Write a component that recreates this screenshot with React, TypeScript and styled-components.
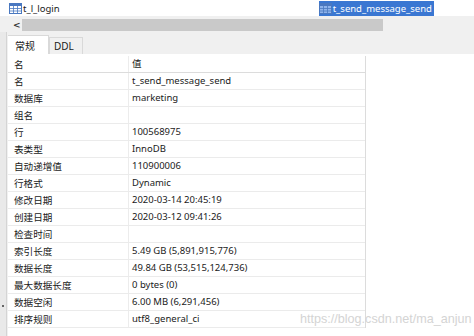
import * as React from 'react'
import styled, { createGlobalStyle } from 'styled-components'

const GlobalStyle = createGlobalStyle`
  html, body {
    margin: 0;
    padding: 0;
    background: #ffffff;
    overflow: hidden;
  }
  body {
    font-family: "Noto Sans CJK SC", "Noto Sans", sans-serif;
    font-size: 9.6px;
    color: #1a1a1a;
  }
`

const rows: [string, string][] = [
  ['名', 't_send_message_send'],
  ['数据库', 'marketing'],
  ['组名', ''],
  ['行', '100568975'],
  ['表类型', 'InnoDB'],
  ['自动递增值', '110900006'],
  ['行格式', 'Dynamic'],
  ['修改日期', '2020-03-14 20:45:19'],
  ['创建日期', '2020-03-12 09:41:26'],
  ['检查时间', ''],
  ['索引长度', '5.49 GB (5,891,915,776)'],
  ['数据长度', '49.84 GB (53,515,124,736)'],
  ['最大数据长度', '0 bytes (0)'],
  ['数据空闲', '6.00 MB (6,291,456)'],
  ['排序规则', 'utf8_general_ci'],
]

const TableIcon = ({ selected }: { selected?: boolean }) => (
  <svg width="13" height="11" viewBox="0 0 13 11">
    <rect x="0.5" y="0.5" width="12" height="10" fill={selected ? '#8fb4ec' : '#ffffff'} stroke="#4a78c0" />
    <rect x="0.5" y="0.5" width="12" height="2.5" fill="#4a78c0" />
    <path d="M4.5 3v8M8.5 3v8M0.5 5.5h12M0.5 8h12" stroke="#4a78c0" strokeWidth="0.8" />
  </svg>
)

export default function App() {
  return (
    <Page>
      <GlobalStyle />
      <ObjectBar>
        <ObjectItem>
          <TableIcon />
          <ObjectName>t_l_login</ObjectName>
        </ObjectItem>
        <ObjectItem selected>
          <TableIcon selected />
          <ObjectName>t_send_message_send</ObjectName>
        </ObjectItem>
      </ObjectBar>
      <ScrollRow>
        <Arrow>&lt;</Arrow>
        <Thumb />
      </ScrollRow>
      <Body>
        <SideStrip>
          <SideDot />
        </SideStrip>
        <Main>
          <TabBar>
            <Tab active>常规</Tab>
            <Tab>DDL</Tab>
          </TabBar>
          <Pane>
            <Grid>
              <HeaderRow>
                <NameCell>名</NameCell>
                <ValueCell>值</ValueCell>
              </HeaderRow>
              {rows.map(([name, value]) => (
                <Row key={name}>
                  <NameCell>{name}</NameCell>
                  <ValueCell>{value}</ValueCell>
                </Row>
              ))}
            </Grid>
            <Watermark>https://blog.csdn.net/ma_anjun</Watermark>
          </Pane>
        </Main>
      </Body>
    </Page>
  )
}

const Page = styled.div`
  width: 474px;
  height: 336px;
  display: flex;
  flex-direction: column;
  overflow: hidden;
  background: #ffffff;
`
const ObjectBar = styled.div`
  height: 16px;
  display: flex;
  align-items: center;
  padding-left: 9px;
  gap: 257px;
  background: #ffffff;
`
const ObjectItem = styled.div<{ selected?: boolean }>`
  display: flex;
  align-items: center;
  height: 15px;
  padding-right: 2px;
  background: ${({ selected }) => (selected ? '#3a77d2' : 'transparent')};
  color: ${({ selected }) => (selected ? '#ffffff' : '#1a1a1a')};
  font-family: "Noto Sans", "Noto Sans CJK SC", sans-serif;
  font-size: 9.5px;
  line-height: 15px;
`
const ObjectName = styled.span`
  margin-left: 1px;
`
const ScrollRow = styled.div`
  height: 14px;
  display: flex;
  align-items: center;
  background: #f0f0f0;
  padding-left: 13px;
  padding-top: 2px;
`
const Arrow = styled.span`
  width: 9px;
  font-family: "DejaVu Sans", sans-serif;
  font-size: 9px;
  font-weight: bold;
  color: #333333;
`
const Thumb = styled.div`
  width: 361px;
  height: 12px;
  background: #c9c9c9;
`
const Body = styled.div`
  flex: 1;
  display: flex;
  background: #f0f0f0;
`
const SideStrip = styled.div`
  width: 6px;
  border-right: 1px solid #d4d4d4;
  background: #e9e9e9;
  position: relative;
`
const SideDot = styled.div`
  position: absolute;
  left: 2px;
  top: 273px;
  width: 2px;
  height: 2px;
  background: #666666;
`
const Main = styled.div`
  flex: 1;
  display: flex;
  flex-direction: column;
  padding-left: 1px;
  padding-top: 3px;
`
const TabBar = styled.div`
  display: flex;
  height: 19px;
  align-items: flex-end;
`
const Tab = styled.div<{ active?: boolean }>`
  height: ${({ active }) => (active ? '19px' : '17px')};
  padding: ${({ active }) => (active ? '0 13px 0 7px' : '0 8px 0 4px')};
  display: flex;
  align-items: center;
  background: ${({ active }) => (active ? '#ffffff' : '#f0f0f0')};
  border: 1px solid #d9d9d9;
  border-bottom: none;
  border-left: ${({ active }) => (active ? 'none' : '1px solid #d9d9d9')};
  font-family: "Noto Sans", "Noto Sans CJK SC", sans-serif;
  font-size: 10px;
  color: #1a1a1a;
  box-sizing: border-box;
`
const Pane = styled.div`
  flex: 1;
  background: #ffffff;
  position: relative;
`
const Grid = styled.div`
  width: 357px;
  display: flex;
  flex-direction: column;
  border-right: 1px solid #dcdcdc;
  margin-top: 2px;
`
const Row = styled.div`
  display: grid;
  grid-template-columns: 120px 1fr;
  height: 17px;
  box-sizing: border-box;
  border-bottom: 1px solid #ebebeb;
  align-items: center;
`
const HeaderRow = styled(Row)`
  border-bottom: 1px solid #dcdcdc;
`
const NameCell = styled.div`
  padding-left: 6px;
  white-space: nowrap;
  line-height: 16px;
`
const ValueCell = styled.div`
  padding-left: 3px;
  white-space: nowrap;
  line-height: 16px;
  height: 16px;
  border-left: 1px solid #ececec;
  font-family: "Noto Sans", "Noto Sans CJK SC", sans-serif;
  font-size: 9.5px;
`
const Watermark = styled.div`
  position: absolute;
  left: 292px;
  top: 258px;
  white-space: nowrap;
  font-family: "Liberation Sans", sans-serif;
  font-size: 12.6px;
  color: #d4d4d4;
`
